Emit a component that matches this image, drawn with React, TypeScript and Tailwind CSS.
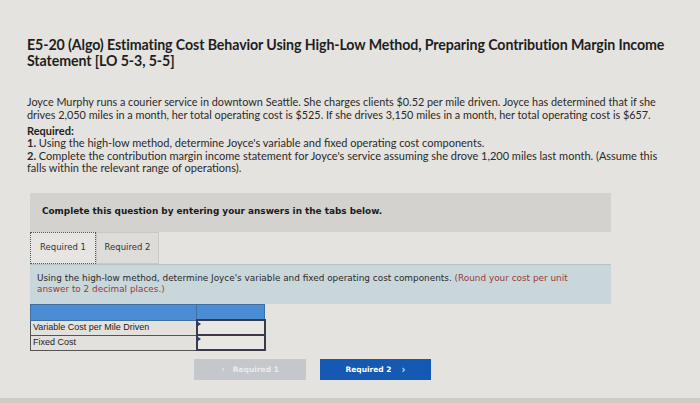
import React from "react";

export default function App() {
  return (
    <div className="w-[700px] h-[403px] overflow-hidden bg-[#e5e3df] relative flex flex-col" style={{ fontFamily: "Lato, sans-serif" }}>
      <div className="pl-[27px] pr-[20px] pt-[37px] flex-1">
        <h1 className="text-[14.2px] leading-[16px] font-bold text-[#1e1e1e] tracking-[-0.1px]">
          E5-20 (Algo) Estimating Cost Behavior Using High-Low Method, Preparing Contribution Margin Income<br />Statement [LO 5-3, 5-5]
        </h1>
        <p className="mt-[26px] text-[10.85px] leading-[13px] text-[#2a2a2a]">
          Joyce Murphy runs a courier service in downtown Seattle. She charges clients $0.52 per mile driven. Joyce has determined that if she<br />drives 2,050 miles in a month, her total operating cost is $525. If she drives 3,150 miles in a month, her total operating cost is $657.
        </p>
        <p className="mt-[3px] text-[11px] leading-[13px] font-bold text-[#1e1e1e]">Required:</p>
        <p className="text-[11px] leading-[12.5px] text-[#2a2a2a]"><b>1.</b> Using the high-low method, determine Joyce's variable and fixed operating cost components.</p>
        <p className="text-[11px] leading-[12.5px] text-[#2a2a2a]"><b>2.</b> Complete the contribution margin income statement for Joyce's service assuming she drove 1,200 miles last month. (Assume this<br />falls within the relevant range of operations).</p>

        <div className="ml-[3px] mt-[18px] w-[581px]" style={{ fontFamily: "'DejaVu Sans', Verdana, sans-serif" }}>
          <div className="h-[39px] bg-[#d3d2cf] flex items-center pl-[12px]">
            <span className="text-[8.9px] font-bold text-[#1a1a1a]">Complete this question by entering your answers in the tabs below.</span>
          </div>
          <div className="flex h-[32px]">
            <div className="w-[66px] h-[32px] border border-dotted border-[#555] bg-[#e6e5e2] flex items-center justify-center text-[8.5px] text-[#333]">Required 1</div>
            <div className="w-[63px] h-[32px] border border-[#c9c8c4] bg-[#dddcd8] flex items-center justify-center text-[8.5px] text-[#333]">Required 2</div>
          </div>
          <div className="h-[40px] bg-[#c9d6da] border-t border-[#b6c2c6] pl-[7px] pt-[8px] text-[8.9px] leading-[11.5px] text-[#2a2a2a]">
            Using the high-low method, determine Joyce's variable and fixed operating cost components. <span className="text-[#9a3a3a]">(Round your cost per unit<br />answer to 2 decimal places.)</span>
          </div>
          <table className="border-collapse text-[9px] text-[#222]" style={{ fontFamily: "'Liberation Sans', Arial, sans-serif" }}>
            <tbody>
              <tr className="h-[16px]">
                <td className="w-[166px] bg-[#4b8dd4] border border-[#3f6f9f]"></td>
                <td className="w-[68px] bg-[#4b8dd4] border border-[#3f6f9f]"></td>
              </tr>
              <tr className="h-[15px]">
                <td className="border border-[#555] pl-[2px] bg-[#e2e1de]">Variable Cost per Mile Driven</td>
                <td className="border-2 border-[#3a3a4a] bg-[#e8e7e4] relative"><span className="absolute left-0 top-[1px] w-0 h-0 border-y-[2px] border-y-transparent border-l-[3px] border-l-[#1d3a8a]"></span></td>
              </tr>
              <tr className="h-[15px]">
                <td className="border border-[#555] pl-[2px] bg-[#e2e1de]">Fixed Cost</td>
                <td className="border-2 border-[#3a3a4a] bg-[#e8e7e4] relative"><span className="absolute left-0 top-[1px] w-0 h-0 border-y-[2px] border-y-transparent border-l-[3px] border-l-[#1d3a8a]"></span></td>
              </tr>
            </tbody>
          </table>
          <div className="flex gap-[14px] ml-[164px] mt-[8px]">
            <div className="w-[112px] h-[21px] bg-[#c4c8ca] flex items-center justify-center gap-[8px] text-[7.5px] font-bold text-[#e9ecee]">
              <span className="text-[9px] font-normal">‹</span>Required 1
            </div>
            <div className="w-[111px] h-[21px] bg-[#1559b3] flex items-center justify-center gap-[10px] text-[7.5px] font-bold text-white">
              Required 2<span className="text-[10px] font-normal">›</span>
            </div>
          </div>
        </div>
      </div>
      <div className="h-[5px] bg-[#cfccc6]"></div>
    </div>
  );
}
